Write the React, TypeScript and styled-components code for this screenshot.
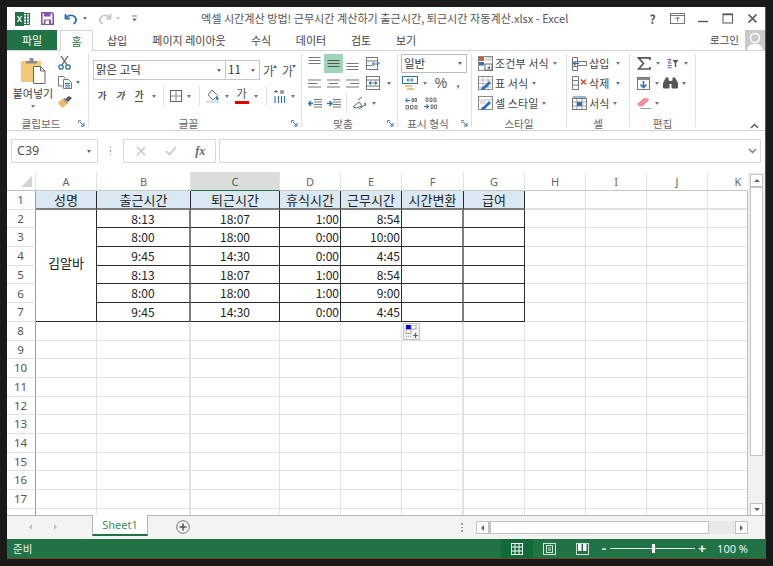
import React from "react";
import styled, { createGlobalStyle } from "styled-components";

const KR = '"Noto Sans CJK KR", "Noto Sans", sans-serif';

const Global = createGlobalStyle`
  html, body { margin: 0; padding: 0; background: #1a1a1a; }
  * { box-sizing: border-box; }
`;

const Page = styled.div`
  width: 773px; height: 566px; padding: 7px 7px 0 7px; background: #1a1a1a; overflow: hidden;
  font-family: ${KR}; line-height: 1; color: #444;
`;
const Window = styled.div`
  width: 759px; height: 552px; display: flex; flex-direction: column; background: #fff;
  border-right: 1px solid #217346; border-bottom: 1px solid #6b4a2a;
`;

/* title bar */
const TitleBar = styled.header`
  height: 23px; display: flex; align-items: center; position: relative; padding-left: 8px; flex: none;
`;
const QuickSlot = styled.span<{ $w: number }>`
  width: ${p => p.$w}px; display: flex; align-items: center; justify-content: center; flex: none;
`;
const TitleText = styled.div`
  position: absolute; left: 194px; top: 6px; font-size: 11.1px; color: #555; white-space: nowrap;
`;
const WinControls = styled.div`
  margin-left: auto; display: flex; align-items: center; padding-right: 0;
`;
const WinBtn = styled.span`
  width: 25px; display: flex; justify-content: center; align-items: center; color: #555; font-size: 12px; font-weight: 700;
`;

/* tabs */
const TabBar = styled.nav`
  height: 21px; display: flex; align-items: flex-end; flex: none; border-bottom: 1px solid #d4d4d4; position: relative;
`;
const FileTab = styled.div`
  width: 50px; height: 20px; background: #217346; color: #fff; font-size: 11px;
  display: flex; align-items: center; justify-content: center; margin-right: 3px;
`;
const Tab = styled.div<{ $w: number; $active?: boolean }>`
  width: ${p => p.$w}px; height: ${p => (p.$active ? 21 : 20)}px; font-size: 11px; display: flex; align-items: center; justify-content: center;
  color: ${p => (p.$active ? "#217346" : "#444")};
  background: #fff;
  ${p => (p.$active ? "border: 1px solid #d4d4d4; border-bottom: none; margin-bottom: -1px; z-index: 1;" : "")}
`;
const Login = styled.div`
  margin-left: auto; display: flex; align-items: center; height: 20px; font-size: 10.5px; gap: 6px; color: #444;
`;
const Avatar = styled.div`
  width: 20px; height: 20px; background: #c9c9c9; overflow: hidden; display: flex;
`;

/* ribbon */
const Ribbon = styled.div`
  height: 80px; flex: none; display: flex; padding-top: 3px; border-bottom: 1px solid #d4d4d4; background: #fff;
`;
const Group = styled.section<{ $w: number }>`
  width: ${p => p.$w}px; height: 73px; flex: none; position: relative; display: flex; flex-direction: column;
  border-right: 1px solid #e1e1e1;
`;
const GroupBody = styled.div<{ $pl?: number; $row?: boolean }>`
  flex: 1; display: flex; flex-direction: ${p => (p.$row ? "row" : "column")}; padding-left: ${p => p.$pl ?? 0}px; min-height: 0;
`;
const GroupLabel = styled.div<{ $launcher?: boolean }>`
  height: 13px; padding-top: 5px; font-size: 10.6px; color: #666; text-align: center; white-space: nowrap;
  padding-right: ${p => (p.$launcher ? 13 : 0)}px;
`;
const Launcher = styled.span`
  position: absolute; right: 3px; bottom: 0; display: flex;
`;
const Caret = styled.i<{ $c?: string }>`
  display: block; width: 0; height: 0; border-left: 2.5px solid transparent; border-right: 2.5px solid transparent;
  border-top: 3px solid ${p => p.$c ?? "#777"};
`;
const Slot = styled.span<{ $w: number; $h?: number; $on?: boolean }>`
  width: ${p => p.$w}px; ${p => (p.$h ? `height:${p.$h}px;` : "")} flex: none; display: flex; align-items: center; justify-content: center;
  ${p => (p.$on ? "background:#9fd5b7;" : "")}
`;
const Sep = styled.span<{ $w: number }>`
  width: ${p => p.$w}px; height: 20px; flex: none; display: flex; justify-content: center;
  &::before { content: ""; width: 1px; background: #e1e1e1; }
`;
const Row = styled.div<{ $h: number; $pl?: number; $mt?: number }>`
  height: ${p => p.$h}px; display: flex; align-items: center; flex: none;
  padding-left: ${p => p.$pl ?? 0}px; margin-top: ${p => p.$mt ?? 0}px;
`;
const PasteCol = styled.div`
  width: 46px; margin-left: 3px; display: flex; flex-direction: column; align-items: center; padding-top: 4px; flex: none;
`;
const PasteLabel = styled.div`
  font-size: 11px; margin-top: 4px; white-space: nowrap; color: #444; margin-bottom: 6px;
`;
const ToolCol = styled.div`
  margin-left: 2px; display: flex; flex-direction: column;
`;
const Combo = styled.div<{ $w: number; $h: number; $strong?: boolean }>`
  width: ${p => p.$w}px; height: ${p => p.$h}px; flex: none; border: 1px solid ${p => (p.$strong ? "#bdbdbd" : "#c6c6c6")};
  display: flex; align-items: center; justify-content: space-between; padding: 0 4px 0 2px;
  font-size: 11.5px; color: #333; margin-left: -1px;
  &:first-child { margin-left: 0; }
`;
const FontChar = styled.span<{ $u?: boolean; $i?: boolean }>`
  font-size: 9.5px; font-weight: 700; color: #555; font-style: ${p => (p.$i ? "italic" : "normal")};
  ${p => (p.$u ? "border-bottom: 1px solid #555; padding-bottom: 1px;" : "")}
`;
const SizeChar = styled.span<{ $big?: boolean }>`
  font-size: ${p => (p.$big ? 12 : 10.5)}px; color: #555; position: relative; top: 1px;
`;
const UpMark = styled.i<{ $down?: boolean }>`
  display: block; width: 0; height: 0; margin: 0 0 8px -1px;
  border-left: 2px solid transparent; border-right: 2px solid transparent;
  ${p => (p.$down ? "border-top: 3px solid #2a72b5;" : "border-bottom: 3px solid #2a72b5;")}
`;
const RedChar = styled.span`
  display: flex; flex-direction: column; align-items: center; font-size: 11.5px; color: #555; gap: 1px; width: 14px;
  &::after { content: ""; width: 14px; height: 3px; background: #e00000; }
`;
const NumChar = styled.span<{ $s: number; $b?: boolean }>`
  font-size: ${p => p.$s}px; color: #555; font-weight: ${p => (p.$b ? 700 : 400)}; font-family: "Liberation Sans", sans-serif;
`;
const StyleText = styled.span<{ $w?: number }>`
  font-size: 11px; color: #444; margin-left: 2px; white-space: nowrap; ${p => (p.$w ? `width:${p.$w}px;` : "margin-right:4px;")} letter-spacing: .1px; flex: none;
`;
const Collapse = styled.span`
  margin-left: auto; align-self: flex-end; width: 22px; display: flex; justify-content: center; margin-bottom: 1px;
`;

/* formula bar */
const FormulaBar = styled.div`
  height: 41px; flex: none; display: flex; align-items: flex-start; padding: 8px 4px 0 4px;
`;
const NameBox = styled.div`
  width: 87px; height: 24px; border: 1px solid #d9d9d9; display: flex; align-items: center; justify-content: space-between;
  padding: 0 6px 0 5px; font-size: 12.5px; color: #555; font-family: "Noto Sans", sans-serif;
`;
const Dots = styled.div`
  width: 25px; height: 24px; display: flex; flex-direction: column; align-items: center; justify-content: center; gap: 2px;
  & > i { width: 1.5px; height: 1.5px; background: #999; display: block; }
`;
const FxBox = styled.div`
  width: 93px; height: 24px; border: 1px solid #d9d9d9; display: flex; align-items: center; padding-left: 2px; flex: none;
`;
const FxSlot = styled.span`
  width: 30px; display: flex; justify-content: center; align-items: center;
`;
const FxText = styled.span`
  font-family: "Liberation Serif", serif; font-style: italic; font-weight: 700; font-size: 12px; color: #666;
`;
const FormulaInput = styled.div`
  flex: 1; height: 24px; margin-left: 3px; border: 1px solid #d9d9d9; display: flex; align-items: center; justify-content: flex-end; padding-right: 3px;
`;

/* sheet */
const SheetArea = styled.div`
  height: 343px; flex: none; display: flex; overflow: hidden;
`;
const GridWrap = styled.div`
  width: 741px; height: 343px; position: relative; overflow: hidden; flex: none;
  &::after { content: ""; position: absolute; right: 0; top: 19px; bottom: 0; width: 1px; background: #bdbdbd; }
`;
const SheetGrid = styled.div`
  display: grid;
  grid-template-columns: 29px 61px 94px 89px 61px 61px 62px 61px 61px 61px 61px 61px;
  grid-template-rows: 19px repeat(18, 18.7px);
  width: 762px;
`;
const Corner = styled.div`
  display: flex; align-items: flex-end; justify-content: flex-end; padding: 0 3px 3px 0; border-right: 1px solid #e2e2e2;
  border-bottom: 1px solid #bdbdbd;
`;
const ColHead = styled.div<{ $sel?: boolean }>`
  display: flex; align-items: center; justify-content: center; font-size: 11px;
  font-family: "Noto Sans", sans-serif;
  color: ${p => (p.$sel ? "#217346" : "#666")};
  background: ${p => (p.$sel ? "#dcdcdc" : "#fff")};
  border-right: 1px solid #e2e2e2;
  border-bottom: ${p => (p.$sel ? "1px solid #217346" : "1px solid #c8c8c8")};
`;
const RowHead = styled.div`
  display: flex; align-items: center; justify-content: center; font-size: 11.5px; color: #555;
  font-family: "Noto Sans", sans-serif;
  border-right: 1px solid #9c9c9c; border-bottom: 1px solid #e2e2e2; padding-right: 1px;
`;
const Cell = styled.div<{
  $r?: string; $b?: string; $bw?: number; $rw?: number; $fill?: string; $al?: string; $span?: number; $sz?: number;
}>`
  display: flex; align-items: center; justify-content: ${p => p.$al ?? "center"};
  ${p => (p.$span ? `grid-row: span ${p.$span}; padding-bottom: 5px;` : "")}
  border-right: ${p => p.$rw ?? 1}px solid ${p => p.$r ?? "#e2e2e2"};
  border-bottom: ${p => p.$bw ?? 1}px solid ${p => p.$b ?? "#e2e2e2"};
  ${p => (p.$fill ? `background:${p.$fill};` : "")}
  font-size: ${p => p.$sz ?? 12}px; color: #222; padding-left: 1px; padding-right: 1px; white-space: nowrap; overflow: hidden;
`;
const PasteOpts = styled.div`
  position: absolute; left: 396px; top: 151px; width: 17px; height: 17px; background: #f1f1f1; border: 1px solid #c4c4c4;
  display: flex; align-items: center; justify-content: center;
`;
const VScroll = styled.div`
  width: 17px; flex: none; display: flex; flex-direction: column; align-items: center; background: #f0f0f0; padding: 2px 2px 0 2px;
`;
const ScrollBtn = styled.div`
  width: 13px; height: 13px; border: 1px solid #c2c2c2; background: #fff; flex: none; display: flex; align-items: center; justify-content: center;
`;
const VThumb = styled.div`
  width: 13px; height: 269px; border: 1px solid #c2c2c2; background: #fff; margin-bottom: 47px; flex: none;
`;
const TriUp = styled.i`
  display: block; width: 0; height: 0; border-left: 3px solid transparent; border-right: 3px solid transparent; border-bottom: 3px solid #666;
`;
const TriDown = styled.i`
  display: block; width: 0; height: 0; border-left: 3px solid transparent; border-right: 3px solid transparent; border-top: 3px solid #666;
`;
const TriSide = styled.i<{ $left?: boolean; $c?: string }>`
  display: block; width: 0; height: 0; border-top: 3px solid transparent; border-bottom: 3px solid transparent;
  ${p => (p.$left ? `border-right: 3px solid ${p.$c ?? "#666"};` : `border-left: 3px solid ${p.$c ?? "#666"};`)}
`;

/* sheet tabs */
const SheetBar = styled.div`
  height: 24px; flex: none; display: flex; align-items: flex-start; background: #f3f3f3; border-top: 1px solid #b5b5b5; padding-left: 11px;
`;
const NavSlot = styled.span`
  width: 25px; height: 22px; display: flex; align-items: center; justify-content: center; flex: none;
`;
const SheetTab = styled.div`
  width: 56px; height: 21px; margin-top: -1px; background: #fff; border-left: 1px solid #b5b5b5; border-right: 1px solid #b5b5b5;
  border-bottom: 2px solid #217346; display: flex; align-items: center; justify-content: center;
  color: #3f8a62; font-size: 11px; font-family: "Noto Sans", sans-serif; margin-left: 24px; flex: none;
`;
const AddSheet = styled.span`
  width: 14px; height: 14px; margin: 4px 0 0 28px; flex: none; display: flex;
`;
const TabDots = styled(Dots)`
  width: 8px; height: 13px; margin: 5px 0 0 268px; gap: 2px; flex: none;
`;
const HScroll = styled.div`
  width: 272px; height: 13px; margin: 5px 0 0 10px; display: flex; background: #e9e9e9; flex: none;
`;
const HThumb = styled.div`
  width: 220px; height: 13px; background: #fff; border: 1px solid #c2c2c2; border-left: 2px solid #c2c2c2;
`;
const HSpacer = styled.div`
  flex: 1;
`;

/* status */
const StatusBar = styled.footer`
  height: 19px; flex: none; background: #217346; display: flex; align-items: center; padding-left: 6px; font-size: 10.5px; color: #e8f2ec;
`;
const ReadyText = styled.span`
  padding-top: 1px;
`;
const ViewBtn = styled.span<{ $on?: boolean; $w: number }>`
  width: ${p => p.$w}px; height: 19px; display: flex; align-items: center; justify-content: center; flex: none;
  background: ${p => (p.$on ? "#0f6b38" : "transparent")};
`;
const ViewGroup = styled.div`
  margin-left: auto; display: flex; align-items: center;
`;
const ZoomGlyph = styled.span`
  width: 10px; display: flex; justify-content: center; font-size: 13px; font-weight: 700; color: #fff; font-family: "Liberation Sans", sans-serif;
`;
const ZoomTrack = styled.div`
  width: 85px; height: 1px; background: #dfeee6; position: relative; margin: 0 2px 0 1px; flex: none;
`;
const ZoomThumb = styled.i`
  position: absolute; left: 42px; top: -4px; width: 3px; height: 9px; background: #fff; display: block;
`;
const ZoomText = styled.span`
  width: 58px; text-align: right; font-size: 11px; padding-right: 17px; white-space: nowrap; flex: none; font-family: "Noto Sans", sans-serif; color: #e8f2ec;
`;

/* icons */
const ExcelLogo = () => (
  <svg width="15" height="14" viewBox="0 0 15 14">
    <rect x="4.5" y="1.5" width="10" height="11" fill="#fff" stroke="#217346" />
    <path d="M9 4h5M9 7h5M9 10h5M11.5 2v10" stroke="#217346" strokeWidth="1" />
    <rect x="0" y="0" width="9" height="14" fill="#217346" />
    <path d="M2.5 4l4 6M6.5 4l-4 6" stroke="#fff" strokeWidth="1.3" />
  </svg>
);
const SaveIcon = () => (
  <svg width="13" height="13" viewBox="0 0 13 13">
    <path d="M.8.8h10l1.4 1.4v10H.8z" fill="#fff" stroke="#8551ad" strokeWidth="1.6" />
    <rect x="3" y="1" width="6.5" height="3.5" fill="#8551ad" />
    <rect x="3" y="7.5" width="7" height="4.5" fill="#8551ad" />
    <rect x="4.5" y="8.5" width="3.5" height="3.5" fill="#fff" />
  </svg>
);
const UndoIcon = () => (
  <svg width="14" height="12" viewBox="0 0 14 12" fill="none" stroke="#2a72b5" strokeWidth="1.8">
    <path d="M1.5 1v4.5H6" />
    <path d="M1.8 5.2C3.5 2 8.5 1.5 11 4c2 2.2 1 5.5-1.5 7" />
  </svg>
);
const RedoIcon = () => (
  <svg width="14" height="12" viewBox="0 0 14 12" fill="none" stroke="#c6c6c6" strokeWidth="1.8">
    <path d="M12.5 1v4.5H8" />
    <path d="M12.2 5.2C10.5 2 5.5 1.5 3 4c-2 2.2-1 5.5 1.5 7" />
  </svg>
);
const CustomizeIcon = () => (
  <svg width="7" height="7" viewBox="0 0 7 7"><path d="M1 1h5" stroke="#777" /><path d="M1 3.5h5L3.5 6.5z" fill="#777" /></svg>
);
const RibbonDisplay = () => (
  <svg width="15" height="11" viewBox="0 0 15 11" fill="none" stroke="#777">
    <rect x=".5" y=".5" width="14" height="10" /><path d="M1 2.5h13" />
    <path d="M7.5 8.5v-4M5.5 6l2-2 2 2" />
  </svg>
);
const MinIcon = () => <svg width="12" height="10" viewBox="0 0 12 10"><path d="M1 7.5h10" stroke="#555" strokeWidth="1.4" /></svg>;
const MaxIcon = () => (
  <svg width="12" height="11" viewBox="0 0 12 11" fill="none" stroke="#555"><rect x="1" y="1" width="9.5" height="9" /><path d="M1 1.5h9.5" strokeWidth="1.5" /></svg>
);
const CloseIcon = () => <svg width="11" height="11" viewBox="0 0 11 11"><path d="M1.5 1.5l8 8M9.5 1.5l-8 8" stroke="#555" strokeWidth="1.7" /></svg>;
const AvatarIcon = () => (
  <svg width="20" height="20" viewBox="0 0 20 20"><circle cx="10" cy="8" r="4.5" fill="none" stroke="#fff" strokeWidth="1.6" /><path d="M2 20c1-5 4-6 8-6s7 1 8 6z" fill="#fff" /></svg>
);
const PasteIcon = () => (
  <svg width="25" height="26" viewBox="0 0 25 26">
    <rect x="0" y="3" width="20" height="21" fill="#f0c878" />
    <path d="M5 4.5V3h3.5V0h4v3H16v2.5H5z" fill="#8a8a8a" />
    <path d="M12.5 8.5h7l4.500 4.500v12.500H12.5z" fill="#fff" stroke="#666" />
    <path d="M19.5 8.5V13H24" fill="none" stroke="#666" />
  </svg>
);
const ScissorsIcon = () => (
  <svg width="13" height="14" viewBox="0 0 13 14" fill="none">
    <path d="M3 0l6 9M10 0L4 9" stroke="#666" strokeWidth="1.3" />
    <circle cx="3" cy="11" r="2.2" stroke="#2a72b5" strokeWidth="1.3" />
    <circle cx="10" cy="11" r="2.2" stroke="#2a72b5" strokeWidth="1.3" />
  </svg>
);
const CopyIcon = () => (
  <svg width="14" height="13" viewBox="0 0 14 13" fill="#fff" stroke="#777">
    <path d="M.5.5h5l2 2V10H.5z" />
    <path d="M5.5 3.5h5l3 3v6h-8z" />
    <path d="M7 7.5h5M7 9.200h5M7 11h5" stroke="#2a72b5" />
  </svg>
);
const BrushIcon = () => (
  <svg width="14" height="12" viewBox="0 0 14 12">
    <path d="M0 6l5-3 4 5-4 4C3 11 1 9 0 6z" fill="#eebb6a" />
    <path d="M5 3l4 5 1-1L6.5 2z" fill="#888" />
    <path d="M7 3l4-3 3 2-4 4z" fill="#555" />
  </svg>
);
const CornerMark = () => <svg width="7" height="7" viewBox="0 0 7 7" fill="none" stroke="#888"><path d="M.5 3V.5H3" /><path d="M2 2l3.5 3.5M6 3v3H3" stroke="#2a72b5" /></svg>;
const BorderIcon = () => (
  <svg width="12" height="12" viewBox="0 0 12 12" fill="none" stroke="#666"><rect x=".5" y=".5" width="11" height="11" /><path d="M6 1v10M1 6h10" stroke="#888" /></svg>
);
const FillIcon = () => (
  <svg width="14" height="14" viewBox="0 0 14 14">
    <path d="M6 1l5.5 5.5L7 11 2 6z" fill="#fff" stroke="#777" />
    <path d="M11 7c1 1.3 1.5 2 1.5 2.7a1 1 0 0 1-2.5 0C10 9 10.5 8 11 7z" fill="#2a72b5" />
    <rect x="0" y="11.5" width="13" height="2.5" fill="#cfe0f1" />
  </svg>
);
const PhoneticIcon = () => (
  <svg width="13" height="15" viewBox="0 0 13 15" fill="none">
    <path d="M1 2.5h4M3 1v3M8 1v4M10 1v4M8 3h2" stroke="#666" strokeWidth="1" />
    <path d="M2 7v7M5.5 7v7M8.5 7v7M11.5 7v7" stroke="#2a72b5" strokeWidth="1.1" />
  </svg>
);
const Lines = ({ kind }: { kind: "l" | "c" | "r" }) => {
  const xs: Record<string, string> = {
    l: "M1 3h13M1 6.5h9M1 10h13",
    c: "M1 3h13M3 6.5h9M1 10h13",
    r: "M1 3h13M5 6.5h9M1 10h13",
  };
  return <svg width="15" height="13" viewBox="0 0 15 13" fill="none" stroke="#777"><path d={xs[kind]} /></svg>;
};
const VAlign = ({ y, dark }: { y: number; dark?: boolean }) => (
  <svg width="15" height="13" viewBox="0 0 15 13" fill="none" stroke={dark ? "#555" : "#777"}>
    <path d={`M1.5 ${y}h12M1.5 ${y + 3}h12M1.5 ${y + 6}h12`} />
  </svg>
);
const WrapIcon = () => (
  <svg width="15" height="13" viewBox="0 0 15 13" fill="none" stroke="#777">
    <rect x=".5" y=".5" width="11" height="12" fill="#fff" />
    <path d="M1 4h10M1 8.5h5" />
    <path d="M6 7h7v-2M8.5 5L6 7l2.5 2" stroke="#2a72b5" />
  </svg>
);
const MergeIcon = () => (
  <svg width="14" height="14" viewBox="0 0 14 14" fill="none" stroke="#777">
    <rect x=".5" y=".5" width="13" height="13" />
    <path d="M1 4h12M1 10h12M3 7h8" />
    <path d="M3 7l1.5-1.3v2.6zM11 7L9.5 5.7v2.6z" fill="#2a72b5" stroke="#2a72b5" />
  </svg>
);
const IndentIcon = ({ right }: { right?: boolean }) => (
  <svg width="14" height="11" viewBox="0 0 14 11" fill="none">
    <path d="M6 1.5h8M6 4h8M6 6.5h8M6 9h8" stroke="#777" />
    <path d={right ? "M0 5.5h4M2.5 3l2.5 2.5L2.5 8" : "M5 5.5H1M3 3L.7 5.5 3 8"} stroke="#2a72b5" strokeWidth="1.3" />
  </svg>
);
const OrientIcon = () => (
  <svg width="15" height="13" viewBox="0 0 15 13" fill="none">
    <path d="M1 10l6-5 3 4-6 2zM6 3l4-3" stroke="#666" />
    <path d="M7 12l7-5M12 6l2 1-1 2" stroke="#2a72b5" />
  </svg>
);
const AcctIcon = () => (
  <svg width="16" height="15" viewBox="0 0 16 15">
    <rect x=".5" y=".5" width="15" height="7" fill="#fff" stroke="#2a72b5" />
    <path d="M5 4h6M6.5 2.5L5 4l1.5 1.5M9.5 2.5L11 4 9.5 5.5" stroke="#2a72b5" fill="none" />
    <path d="M3 9h7v2H3zM5 12h7v2H5z" fill="#eec27a" />
  </svg>
);
const DecUp = () => (
  <svg width="13" height="13" viewBox="0 0 13 13" fill="none">
    <path d="M5 3.5H1M2.5 1.5L.7 3.5 2.5 5.5" stroke="#2a72b5" strokeWidth="1.1" />
    <path d="M7 1.5h1.5v3H7zM10 1.5h1.5v3H10zM1 8.5h2.5v3.5H1zM5.5 8.5H8v3.5H5.5zM10 8.5h2v3.5h-2z" stroke="#666" strokeWidth=".9" />
  </svg>
);
const DecDown = () => (
  <svg width="13" height="13" viewBox="0 0 13 13" fill="none">
    <path d="M0 9.5h4M2.5 7.5L4.5 9.5 2.5 11.5" stroke="#2a72b5" strokeWidth="1.1" />
    <path d="M2 1h2v3.5H2zM6 1h2v3.5H6zM10 1h2v3.5h-2zM7 8h2v3.5H7zM10.5 8h2v3.5h-2z" stroke="#666" strokeWidth=".9" />
  </svg>
);
const CondIcon = () => (
  <svg width="15" height="15" viewBox="0 0 15 15">
    <rect x=".5" y=".5" width="14" height="14" fill="#fff" stroke="#888" />
    <rect x="1" y="1" width="5" height="4" fill="#d95a35" /><rect x="1" y="6" width="5" height="3.5" fill="#2a72b5" />
    <rect x="7" y="1" width="7" height="4" fill="#ddd" /><rect x="7" y="8" width="7" height="6" fill="#fff" stroke="#666" />
    <path d="M9 12l3-2v3z" fill="#555" />
  </svg>
);
const TableFmtIcon = () => (
  <svg width="15" height="15" viewBox="0 0 15 15">
    <rect x=".5" y=".5" width="14" height="13" fill="#fff" stroke="#888" />
    <path d="M1 4h13M1 7.5h13M1 11h13M5 1v12M10 1v12" stroke="#bbb" />
    <path d="M3 14c0-3 2-3 3-4l5-5 2 2-5 5c-1 1-2 2-5 2z" fill="#2a72b5" />
  </svg>
);
const CellStyleIcon = () => (
  <svg width="15" height="15" viewBox="0 0 15 15">
    <rect x=".5" y=".5" width="14" height="13" fill="#fff" stroke="#888" />
    <path d="M1 4h13" stroke="#bbb" /><rect x="2" y="5" width="6" height="3" fill="#ddd" />
    <path d="M3 14c0-3 2-3 3-4l5-5 2 2-5 5c-1 1-2 2-5 2z" fill="#2a72b5" />
  </svg>
);
const CellInsert = () => (
  <svg width="15" height="14" viewBox="0 0 15 14" fill="none" stroke="#777">
    <path d="M.5.5h5v13h-5zM.5 5h5M.5 9.5h5M5.5 4.5H14.5v4h-9" />
    <path d="M7 6.5H1.5M3.5 4.5l-2 2 2 2" stroke="#2a72b5" strokeWidth="1.2" />
  </svg>
);
const CellDelete = () => (
  <svg width="15" height="14" viewBox="0 0 15 14" fill="none" stroke="#777">
    <path d="M.5.5h6v4h-6zM.5 9h6v4.500h-6zM.5 4.500V9M6.5 4.500V9" />
    <path d="M9 3.500l5 5M14 3.500l-5 5" stroke="#d9442a" strokeWidth="1.4" />
  </svg>
);
const CellFormat = () => (
  <svg width="15" height="14" viewBox="0 0 15 14" fill="none" stroke="#777">
    <rect x=".5" y="2.5" width="14" height="11" fill="#fff" />
    <path d="M1 6h13M1 10h13M5 3v10M10 3v10" stroke="#999" />
    <rect x="5" y="6" width="5" height="4" fill="#2a72b5" stroke="none" />
    <path d="M1 1h13" stroke="#2a72b5" />
  </svg>
);
const SigmaIcon = () => (
  <svg width="14" height="13" viewBox="0 0 14 13"><path d="M13 3V.8H1.5L6.5 6.5 1.5 12H13v-2" fill="none" stroke="#555" strokeWidth="1.7" /></svg>
);
const SortIcon = () => (
  <svg width="12" height="11" viewBox="0 0 12 11" fill="none">
    <path d="M.5 1.5h3.5L1 5h3.5M.5 7.5h4M.5 9.8h4" stroke="#8551ad" />
    <path d="M5.5 2h6L9.2 5v4H7.8V5z" fill="#555" />
  </svg>
);
const FillDown = () => (
  <svg width="13" height="13" viewBox="0 0 13 13">
    <rect x=".5" y=".5" width="12" height="12" fill="#fff" stroke="#777" />
    <rect x="1" y="1" width="11" height="2" fill="#888" />
    <path d="M6.5 4v6M3.5 7.5l3 3 3-3" fill="none" stroke="#2a72b5" strokeWidth="1.6" />
  </svg>
);
const BinocIcon = () => (
  <svg width="15" height="12" viewBox="0 0 15 12" fill="#555">
    <path d="M3 .5h2.5v3H6.5V10.500a1 1 0 0 1-1 1H1a1 1 0 0 1-1-1V6zM12 .5H9.5v3H8.5v7a1 1 0 0 0 1 1H14a1 1 0 0 0 1-1V6zM6.5 4h2v3h-2z" />
  </svg>
);
const EraserIcon = () => (
  <svg width="14" height="12" viewBox="0 0 14 12">
    <path d="M0 7l7-6 5 .5-1 3-6 5H2z" fill="#ee8f9d" />
    <path d="M3 11.5h11" stroke="#aaa" />
  </svg>
);
const ChevronUp = () => <svg width="9" height="6" viewBox="0 0 9 6" fill="none" stroke="#555" strokeWidth="1.3"><path d="M1 5l3.5-3.5L8 5" /></svg>;
const ChevronDown = () => <svg width="9" height="6" viewBox="0 0 9 6" fill="none" stroke="#777" strokeWidth="1.3"><path d="M1 1l3.5 3.5L8 1" /></svg>;
const CancelMark = () => <svg width="10" height="10" viewBox="0 0 10 10"><path d="M1 1l8 8M9 1l-8 8" stroke="#c4c4c4" strokeWidth="1.3" /></svg>;
const CheckMark = () => <svg width="12" height="10" viewBox="0 0 12 10"><path d="M1 5l3.5 3.5L11 1" fill="none" stroke="#c4c4c4" strokeWidth="1.5" /></svg>;
const SelectAll = () => <svg width="11" height="11" viewBox="0 0 11 11"><path d="M11 0v11H0z" fill="#d3d3d3" /></svg>;
const PasteOptIcon = () => (
  <svg width="13" height="13" viewBox="0 0 13 13">
    <rect x="1" y="0" width="5" height="4" fill="#0000d8" /><rect x="6" y="0" width="5" height="4" fill="#fff" stroke="#888" strokeWidth=".7" />
    <rect x="1" y="4.5" width="5" height="4" fill="#fff" stroke="#888" strokeWidth=".7" />
    <path d="M1 11.5h5" stroke="#aaa" strokeDasharray="1 1" /><path d="M8 10.5h5M10.5 8v5" stroke="#666" strokeWidth="1.2" />
  </svg>
);
const AddIcon = () => (
  <svg width="14" height="14" viewBox="0 0 14 14" fill="none">
    <circle cx="7" cy="7" r="6.3" stroke="#777" /><path d="M7 3.5v7M3.5 7h7" stroke="#555" strokeWidth="1.5" />
  </svg>
);
const NormalView = () => (
  <svg width="12" height="12" viewBox="0 0 12 12" fill="none" stroke="#fff"><rect x=".5" y=".5" width="11" height="11" /><path d="M4 1v10M8 1v10M1 4h10M1 8h10" /></svg>
);
const LayoutView = () => (
  <svg width="13" height="12" viewBox="0 0 13 12" fill="none" stroke="#cfe3d8"><rect x=".5" y=".5" width="12" height="11" /><rect x="3.5" y="2.5" width="6" height="7" /><path d="M5 5h3M5 7h3" /></svg>
);
const BreakView = () => (
  <svg width="13" height="12" viewBox="0 0 13 12"><rect x=".5" y=".5" width="12" height="11" fill="none" stroke="#cfe3d8" /><rect x="2" y="1" width="3.5" height="7" fill="#fff" /><rect x="7" y="1" width="3.5" height="7" fill="#fff" /></svg>
);

/* data */
const COLS = ["A", "B", "C", "D", "E", "F", "G", "H", "I", "J", "K"];
const HEAD = ["성명", "출근시간", "퇴근시간", "휴식시간", "근무시간", "시간변환", "급여"];
const DATA = [
  ["8:13", "18:07", "1:00", "8:54"],
  ["8:00", "18:00", "0:00", "10:00"],
  ["9:45", "14:30", "0:00", "4:45"],
  ["8:13", "18:07", "1:00", "8:54"],
  ["8:00", "18:00", "1:00", "9:00"],
  ["9:45", "14:30", "0:00", "4:45"],
];
const DARK = "#2b2b2b";
const GREY = "#7d7d7d";
const ROWS = Array.from({ length: 18 }, (_, i) => i + 1);

const softRightWidth = (c: number) => (c === 1 || c === 5 ? 2 : 1);

function renderRow(r: number) {
  const out: React.ReactNode[] = [<RowHead key={`h${r}`}>{r < 18 ? r : ""}</RowHead>];
  if (r === 1) {
    COLS.forEach((_, c) => {
      if (c < 7)
        out.push(
          <Cell key={c} $fill="#dae8f4" $r={DARK} $rw={1} $b={GREY} $bw={2} $sz={13}>
            {HEAD[c]}
          </Cell>
        );
      else out.push(<Cell key={c} $bw={2} />);
    });
    return out;
  }
  if (r >= 2 && r <= 7) {
    if (r === 2)
      out.push(
        <Cell key="merged" $span={6} $r={DARK} $b={DARK} $sz={13}>
          김알바
        </Cell>
      );
    for (let c = 1; c < 11; c++) {
      if (c > 6) {
        out.push(<Cell key={c} />);
        continue;
      }
      const val = c <= 4 ? DATA[r - 2][c - 1] : "";
      const right = c === 3 || c === 4;
      const soft = c === 1 || c === 5;
      out.push(
        <Cell key={c} $r={soft ? GREY : DARK} $rw={soft ? 2 : 1} $b={DARK} $al={right ? "flex-end" : "center"}>
          {val}
        </Cell>
      );
    }
    return out;
  }
  COLS.forEach((_, c) => out.push(<Cell key={c} $rw={softRightWidth(c)} />));
  return out;
}

export default function App() {
  return (
    <>
      <Global />
      <Page>
        <Window>
          <TitleBar>
            <QuickSlot $w={15}><ExcelLogo /></QuickSlot>
            <QuickSlot $w={10} />
            <QuickSlot $w={14}><SaveIcon /></QuickSlot>
            <QuickSlot $w={10} />
            <QuickSlot $w={14}><UndoIcon /></QuickSlot>
            <QuickSlot $w={13}><Caret /></QuickSlot>
            <QuickSlot $w={7} />
            <QuickSlot $w={14}><RedoIcon /></QuickSlot>
            <QuickSlot $w={12}><Caret $c="#c6c6c6" /></QuickSlot>
            <QuickSlot $w={7} />
            <QuickSlot $w={7}><CustomizeIcon /></QuickSlot>
            <TitleText>엑셀 시간계산 방법! 근무시간 계산하기 출근시간, 퇴근시간 자동계산.xlsx - Excel</TitleText>
            <WinControls>
              <WinBtn>?</WinBtn>
              <WinBtn><RibbonDisplay /></WinBtn>
              <WinBtn><MinIcon /></WinBtn>
              <WinBtn><MaxIcon /></WinBtn>
              <WinBtn><CloseIcon /></WinBtn>
            </WinControls>
          </TitleBar>
          <TabBar>
            <FileTab>파일</FileTab>
            <Tab $w={33} $active>홈</Tab>
            <Tab $w={48}>삽입</Tab>
            <Tab $w={96}>페이지 레이아웃</Tab>
            <Tab $w={48}>수식</Tab>
            <Tab $w={52}>데이터</Tab>
            <Tab $w={48}>검토</Tab>
            <Tab $w={42}>보기</Tab>
            <Login>
              로그인
              <Avatar><AvatarIcon /></Avatar>
            </Login>
          </TabBar>
          <Ribbon>
            <Group $w={82}>
              <GroupBody $row>
                <PasteCol>
                  <PasteIcon />
                  <PasteLabel>붙여넣기</PasteLabel>
                  <Caret />
                </PasteCol>
                <ToolCol>
                  <Row $h={19} $mt={-1}><ScissorsIcon /></Row>
                  <Row $h={21}><CopyIcon /><Slot $w={11}><Caret /></Slot></Row>
                  <Row $h={18}><BrushIcon /></Row>
                </ToolCol>
              </GroupBody>
              <GroupLabel $launcher>클립보드</GroupLabel>
              <Launcher><CornerMark /></Launcher>
            </Group>
            <Group $w={213}>
              <GroupBody $pl={4}>
                <Row $h={20} $mt={6}>
                  <Combo $w={133} $h={20}>맑은 고딕<Caret $c="#666" /></Combo>
                  <Combo $w={35} $h={20}>11<Caret $c="#666" /></Combo>
                  <Slot $w={20}><SizeChar $big>가</SizeChar><UpMark /></Slot>
                  <Slot $w={18}><SizeChar $big>가</SizeChar><UpMark $down /></Slot>
                </Row>
                <Row $h={20} $mt={6}>
                  <Slot $w={18}><FontChar>가</FontChar></Slot>
                  <Slot $w={18}><FontChar $i>가</FontChar></Slot>
                  <Slot $w={20}><FontChar $u>가</FontChar></Slot>
                  <Slot $w={9}><Caret /></Slot>
                  <Sep $w={10} />
                  <Slot $w={15}><BorderIcon /></Slot>
                  <Slot $w={12}><Caret /></Slot>
                  <Sep $w={8} />
                  <Slot $w={19}><FillIcon /></Slot>
                  <Slot $w={10}><Caret /></Slot>
                  <Slot $w={19}><RedChar>가</RedChar></Slot>
                  <Slot $w={10}><Caret /></Slot>
                  <Sep $w={10} />
                  <Slot $w={16}><PhoneticIcon /></Slot>
                  <Slot $w={11}><Caret /></Slot>
                </Row>
              </GroupBody>
              <GroupLabel $launcher>글꼴</GroupLabel>
              <Launcher><CornerMark /></Launcher>
            </Group>
            <Group $w={96}>
              <GroupBody $pl={3}>
                <Row $h={19}>
                  <Slot $w={19}><VAlign y={0.5} /></Slot>
                  <Slot $w={19} $h={19} $on><VAlign y={3.5} dark /></Slot>
                  <Slot $w={19}><VAlign y={6.5} /></Slot>
                  <Slot $w={22}><WrapIcon /></Slot>
                </Row>
                <Row $h={20}>
                  <Slot $w={19}><Lines kind="l" /></Slot>
                  <Slot $w={19}><Lines kind="c" /></Slot>
                  <Slot $w={19}><Lines kind="r" /></Slot>
                  <Slot $w={22}><MergeIcon /></Slot>
                  <Slot $w={9}><Caret /></Slot>
                </Row>
                <Row $h={20}>
                  <Slot $w={19}><IndentIcon /></Slot>
                  <Slot $w={20}><IndentIcon right /></Slot>
                  <Sep $w={5} />
                  <Slot $w={21}><OrientIcon /></Slot>
                  <Slot $w={8}><Caret /></Slot>
                </Row>
              </GroupBody>
              <GroupLabel $launcher>맞춤</GroupLabel>
              <Launcher><CornerMark /></Launcher>
            </Group>
            <Group $w={74}>
              <GroupBody $pl={3}>
                <Row $h={19}>
                  <Combo $w={66} $h={19} $strong>일반<Caret $c="#666" /></Combo>
                </Row>
                <Row $h={20}>
                  <Slot $w={18}><AcctIcon /></Slot>
                  <Slot $w={12}><Caret /></Slot>
                  <Slot $w={20}><NumChar $s={14}>%</NumChar></Slot>
                  <Slot $w={14}><NumChar $s={11} $b>,</NumChar></Slot>
                </Row>
                <Row $h={20}>
                  <Slot $w={20}><DecUp /></Slot>
                  <Slot $w={18}><DecDown /></Slot>
                </Row>
              </GroupBody>
              <GroupLabel $launcher>표시 형식</GroupLabel>
              <Launcher><CornerMark /></Launcher>
            </Group>
            <Group $w={95}>
              <GroupBody $pl={6}>
                <Row $h={19}><Slot $w={15}><CondIcon /></Slot><StyleText>조건부 서식</StyleText><Caret /></Row>
                <Row $h={20}><Slot $w={15}><TableFmtIcon /></Slot><StyleText>표 서식</StyleText><Caret /></Row>
                <Row $h={20}><Slot $w={15}><CellStyleIcon /></Slot><StyleText>셀 스타일</StyleText><Caret /></Row>
              </GroupBody>
              <GroupLabel>스타일</GroupLabel>
            </Group>
            <Group $w={63}>
              <GroupBody $pl={5}>
                <Row $h={19}><Slot $w={15}><CellInsert /></Slot><StyleText $w={27}>삽입</StyleText><Caret /></Row>
                <Row $h={20}><Slot $w={15}><CellDelete /></Slot><StyleText $w={27}>삭제</StyleText><Caret /></Row>
                <Row $h={20}><Slot $w={15}><CellFormat /></Slot><StyleText>서식</StyleText><Caret /></Row>
              </GroupBody>
              <GroupLabel>셀</GroupLabel>
            </Group>
            <Group $w={66}>
              <GroupBody $pl={6}>
                <Row $h={19}><Slot $w={15}><SigmaIcon /></Slot><Slot $w={14}><Caret /></Slot><Slot $w={16}><SortIcon /></Slot><Slot $w={9}><Caret /></Slot></Row>
                <Row $h={20}><Slot $w={15}><FillDown /></Slot><Slot $w={11}><Caret /></Slot><Slot $w={16}><BinocIcon /></Slot><Slot $w={11}><Caret /></Slot></Row>
                <Row $h={20}><Slot $w={15}><EraserIcon /></Slot><Slot $w={11}><Caret /></Slot></Row>
              </GroupBody>
              <GroupLabel>편집</GroupLabel>
            </Group>
            <Collapse><ChevronUp /></Collapse>
          </Ribbon>
          <FormulaBar>
            <NameBox>C39<Caret $c="#666" /></NameBox>
            <Dots><i /><i /><i /></Dots>
            <FxBox>
              <FxSlot><CancelMark /></FxSlot>
              <FxSlot><CheckMark /></FxSlot>
              <FxSlot><FxText>fx</FxText></FxSlot>
            </FxBox>
            <FormulaInput><ChevronDown /></FormulaInput>
          </FormulaBar>
          <SheetArea>
            <GridWrap>
              <SheetGrid>
                <Corner><SelectAll /></Corner>
                {COLS.map(c => (
                  <ColHead key={c} $sel={c === "C"}>{c}</ColHead>
                ))}
                {ROWS.map(renderRow)}
              </SheetGrid>
              <PasteOpts><PasteOptIcon /></PasteOpts>
            </GridWrap>
            <VScroll>
              <ScrollBtn><TriUp /></ScrollBtn>
              <VThumb />
              <ScrollBtn><TriDown /></ScrollBtn>
            </VScroll>
          </SheetArea>
          <SheetBar>
            <NavSlot><TriSide $left $c="#c0c0c0" /></NavSlot>
            <NavSlot><TriSide $c="#c0c0c0" /></NavSlot>
            <SheetTab>Sheet1</SheetTab>
            <AddSheet><AddIcon /></AddSheet>
            <TabDots><i /><i /><i /></TabDots>
            <HScroll>
              <ScrollBtn><TriSide $left /></ScrollBtn>
              <HThumb />
              <HSpacer />
              <ScrollBtn><TriSide /></ScrollBtn>
            </HScroll>
          </SheetBar>
          <StatusBar>
            <ReadyText>준비</ReadyText>
            <ViewGroup>
              <ViewBtn $w={32} $on><NormalView /></ViewBtn>
              <ViewBtn $w={33}><LayoutView /></ViewBtn>
              <ViewBtn $w={32}><BreakView /></ViewBtn>
              <ViewBtn $w={1} />
              <ZoomGlyph>-</ZoomGlyph>
              <ZoomTrack><ZoomThumb /></ZoomTrack>
              <ZoomGlyph>+</ZoomGlyph>
              <ZoomText>100 %</ZoomText>
            </ViewGroup>
          </StatusBar>
        </Window>
      </Page>
    </>
  );
}
